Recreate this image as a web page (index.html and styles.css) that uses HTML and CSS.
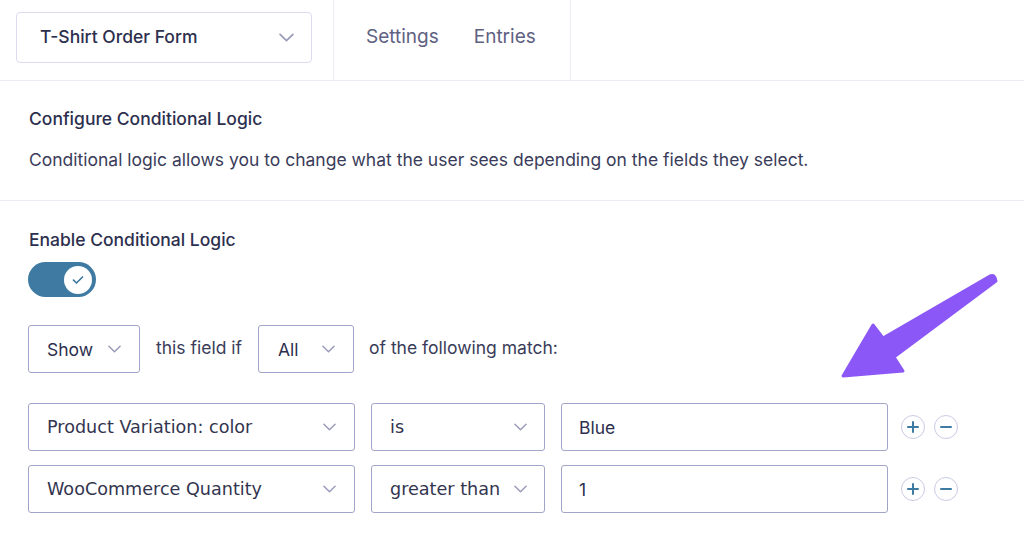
FILE: index.html
```html
<!DOCTYPE html>
<html lang="en">
<head>
<meta charset="utf-8">
<title>Conditional Logic</title>
<link rel="stylesheet" href="styles.css">
</head>
<body>
<div class="page">
  <header class="topbar">
    <div class="picker-cell">
      <div class="picker">
        <span>T-Shirt Order Form</span>
        <svg class="chev" viewBox="0 0 14 8" width="14" height="8"><path d="M1 1l6 6 6-6" fill="none" stroke="currentColor" stroke-width="1.6" stroke-linecap="round" stroke-linejoin="round"/></svg>
      </div>
    </div>
    <nav class="tabs">
      <a class="tab">Settings</a>
      <a class="tab">Entries</a>
    </nav>
    <div class="topfill"></div>
  </header>

  <section class="intro">
    <h2 class="title">Configure Conditional Logic</h2>
    <p class="desc">Conditional logic allows you to change what the user sees depending on the fields they select.</p>
  </section>

  <section class="logic">
    <div class="label">Enable Conditional Logic</div>
    <div class="toggle">
      <span class="knob">
        <svg viewBox="0 0 12 10" width="12" height="10"><path d="M1.5 5.2l3 2.8 6-6" fill="none" stroke="#3e7aa1" stroke-width="1.7" stroke-linecap="round" stroke-linejoin="round"/></svg>
      </span>
    </div>

    <div class="rule-line">
      <div class="sel sel-show"><span>Show</span><svg class="chev" viewBox="0 0 14 8" width="14" height="8"><path d="M1 1l6 6 6-6" fill="none" stroke="currentColor" stroke-width="1.6" stroke-linecap="round" stroke-linejoin="round"/></svg></div>
      <span class="inline-text">this field if</span>
      <div class="sel sel-all"><span>All</span><svg class="chev" viewBox="0 0 14 8" width="14" height="8"><path d="M1 1l6 6 6-6" fill="none" stroke="currentColor" stroke-width="1.6" stroke-linecap="round" stroke-linejoin="round"/></svg></div>
      <span class="inline-text">of the following match:</span>
    </div>

    <div class="conditions">
      <div class="cond">
        <div class="sel sel-field alt"><span>Product Variation: color</span><svg class="chev" viewBox="0 0 14 8" width="14" height="8"><path d="M1 1l6 6 6-6" fill="none" stroke="currentColor" stroke-width="1.6" stroke-linecap="round" stroke-linejoin="round"/></svg></div>
        <div class="sel sel-op alt"><span>is</span><svg class="chev" viewBox="0 0 14 8" width="14" height="8"><path d="M1 1l6 6 6-6" fill="none" stroke="currentColor" stroke-width="1.6" stroke-linecap="round" stroke-linejoin="round"/></svg></div>
        <div class="input">Blue</div>
        <div class="btns">
          <span class="circ"><svg viewBox="0 0 12 12" width="12" height="12"><path d="M6 1v10M1 6h10" stroke="#3e7aa1" stroke-width="2" stroke-linecap="round"/></svg></span>
          <span class="circ"><svg viewBox="0 0 12 12" width="12" height="12"><path d="M1 6h10" stroke="#3e7aa1" stroke-width="2" stroke-linecap="round"/></svg></span>
        </div>
      </div>
      <div class="cond">
        <div class="sel sel-field alt"><span>WooCommerce Quantity</span><svg class="chev" viewBox="0 0 14 8" width="14" height="8"><path d="M1 1l6 6 6-6" fill="none" stroke="currentColor" stroke-width="1.6" stroke-linecap="round" stroke-linejoin="round"/></svg></div>
        <div class="sel sel-op alt"><span>greater than</span><svg class="chev" viewBox="0 0 14 8" width="14" height="8"><path d="M1 1l6 6 6-6" fill="none" stroke="currentColor" stroke-width="1.6" stroke-linecap="round" stroke-linejoin="round"/></svg></div>
        <div class="input">1</div>
        <div class="btns">
          <span class="circ"><svg viewBox="0 0 12 12" width="12" height="12"><path d="M6 1v10M1 6h10" stroke="#3e7aa1" stroke-width="2" stroke-linecap="round"/></svg></span>
          <span class="circ"><svg viewBox="0 0 12 12" width="12" height="12"><path d="M1 6h10" stroke="#3e7aa1" stroke-width="2" stroke-linecap="round"/></svg></span>
        </div>
      </div>
    </div>
  </section>

  <svg class="arrow" viewBox="0 0 180 125" width="180" height="125">
    <path d="M13 111 L43 60 L53 73 L160 11 Q165 9 166 16 L64 92 L73 106 Z" fill="#8b57f6" stroke="#8b57f6" stroke-width="3" stroke-linejoin="round"/>
  </svg>
</div>
</body>
</html>
```

FILE: styles.css
```css
* { box-sizing: border-box; }

html, body {
  margin: 0;
  padding: 0;
  background: #ffffff;
}

body {
  font-family: "Inter", "Noto Sans", sans-serif;
  color: #2d2f4e;
  width: 1024px;
  height: 550px;
  overflow: hidden;
}

.page {
  position: relative;
  width: 1024px;
  height: 550px;
}

/* top bar */
.topbar {
  display: flex;
  height: 81px;
  border-bottom: 1px solid #ececf6;
}

.picker-cell {
  width: 334px;
  padding: 12px 21px 0 16px;
  border-right: 1px solid #ececf6;
}

.picker {
  height: 51px;
  border: 1px solid #dcdcef;
  border-radius: 4px;
  display: flex;
  align-items: center;
  justify-content: space-between;
  padding: 0 17px 2px 23px;
  font-size: 17.5px;
  font-weight: 500;
  color: #2d2f4e;
}

.picker .chev { color: #9a9cba; width: 15px; height: 9px; margin-top: 2px; }

.tabs {
  width: 237px;
  display: flex;
  align-items: center;
  gap: 35px;
  padding: 0 0 8px 32px;
  border-right: 1px solid #ececf6;
}

.tab {
  font-size: 19px;
  color: #5f6182;
  text-decoration: none;
}

.topfill { flex: 1; }

/* intro */
.intro {
  padding: 26px 28px 28px 29px;
  border-bottom: 1px solid #ececf6;
}

.title {
  margin: 0;
  font-size: 17.5px;
  line-height: 24px;
  font-weight: 500;
  color: #2d2f4e;
}

.desc {
  margin: 17px 0 0;
  font-size: 17.5px;
  line-height: 24px;
  color: #3a3c5a;
}

/* logic */
.logic {
  padding: 27px 28px 0 28px;
}

.label {
  font-size: 17.5px;
  line-height: 24px;
  font-weight: 500;
  color: #2d2f4e;
  padding-left: 1px;
}

.toggle {
  margin-top: 10px;
  width: 68px;
  height: 35px;
  border-radius: 18px;
  background: #3e7aa1;
  display: flex;
  align-items: center;
  justify-content: flex-end;
  padding-right: 4px;
}

.knob {
  width: 28px;
  height: 28px;
  border-radius: 50%;
  background: #ffffff;
  display: flex;
  align-items: center;
  justify-content: center;
}

.rule-line {
  margin-top: 28px;
  display: flex;
  align-items: center;
}

.inline-text {
  font-size: 17.5px;
  color: #3a3c5a;
  padding-bottom: 4px;
}

.sel {
  height: 48px;
  border: 1px solid #a3a5c8;
  border-radius: 3px;
  display: flex;
  align-items: center;
  justify-content: space-between;
  padding: 0 18px 0 18px;
  font-size: 17.5px;
  color: #2d2f4e;
}

.sel .chev { color: #9a9cba; width: 13px; height: 8px; flex: none; }

.sel-show { width: 112px; margin-right: 16px; }
.sel-all { width: 96px; margin: 0 15px 0 16px; padding-left: 19px; }

.conditions {
  margin-top: 30px;
  display: flex;
  flex-direction: column;
  gap: 14px;
}

.cond {
  display: flex;
  align-items: center;
}

.alt {
  font-family: "DejaVu Sans", "Verdana", sans-serif;
  font-size: 17.6px;
  color: #33354f;
}

.sel-field { width: 327px; margin-right: 16px; }
.sel-op { width: 174px; margin-right: 16px; padding-right: 17px; }

.input {
  width: 327px;
  height: 48px;
  border: 1px solid #a3a5c8;
  border-radius: 3px;
  display: flex;
  align-items: center;
  padding-left: 17px;
  font-size: 17.5px;
  color: #2d2f4e;
}

.btns {
  display: flex;
  gap: 9px;
  margin-left: 13px;
}

.circ {
  width: 24px;
  height: 24px;
  border-radius: 50%;
  border: 1.5px solid #c9cbe3;
  display: flex;
  align-items: center;
  justify-content: center;
}

.arrow {
  position: absolute;
  left: 830px;
  top: 265px;
}
```
